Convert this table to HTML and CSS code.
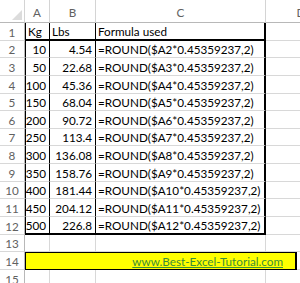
FILE: index.html
```html
<!DOCTYPE html>
<html>
<head>
<meta charset="utf-8">
<link rel="stylesheet" href="styles.css">
</head>
<body>
<div class="sheet">
  <div class="ch corner"><span class="tri"></span></div>
  <div class="ch">A</div>
  <div class="ch">B</div>
  <div class="ch">C</div>
  <div class="ch cd">D</div>

  <div class="rh">1</div>
  <div class="c a hd">Kg</div>
  <div class="c b hd">Lbs</div>
  <div class="c f hd rt">Formula used</div>
  <div class="c d"></div><div class="c e"></div>

  <div class="rh">2</div><div class="c a n">10</div><div class="c b n">4.54</div><div class="c f rt">=ROUND($A2*0.45359237,2)</div><div class="c d"></div><div class="c e"></div>
  <div class="rh">3</div><div class="c a n">50</div><div class="c b n">22.68</div><div class="c f rt">=ROUND($A3*0.45359237,2)</div><div class="c d"></div><div class="c e"></div>
  <div class="rh">4</div><div class="c a n">100</div><div class="c b n">45.36</div><div class="c f rt">=ROUND($A4*0.45359237,2)</div><div class="c d"></div><div class="c e"></div>
  <div class="rh">5</div><div class="c a n">150</div><div class="c b n">68.04</div><div class="c f rt">=ROUND($A5*0.45359237,2)</div><div class="c d"></div><div class="c e"></div>
  <div class="rh">6</div><div class="c a n">200</div><div class="c b n">90.72</div><div class="c f rt">=ROUND($A6*0.45359237,2)</div><div class="c d"></div><div class="c e"></div>
  <div class="rh">7</div><div class="c a n">250</div><div class="c b n">113.4</div><div class="c f rt">=ROUND($A7*0.45359237,2)</div><div class="c d"></div><div class="c e"></div>
  <div class="rh">8</div><div class="c a n">300</div><div class="c b n">136.08</div><div class="c f rt">=ROUND($A8*0.45359237,2)</div><div class="c d"></div><div class="c e"></div>
  <div class="rh">9</div><div class="c a n">350</div><div class="c b n">158.76</div><div class="c f rt">=ROUND($A9*0.45359237,2)</div><div class="c d"></div><div class="c e"></div>
  <div class="rh">10</div><div class="c a n">400</div><div class="c b n">181.44</div><div class="c f rt">=ROUND($A10*0.45359237,2)</div><div class="c d"></div><div class="c e"></div>
  <div class="rh">11</div><div class="c a n">450</div><div class="c b n">204.12</div><div class="c f rt">=ROUND($A11*0.45359237,2)</div><div class="c d"></div><div class="c e"></div>
  <div class="rh">12</div><div class="c a n last">500</div><div class="c b n last">226.8</div><div class="c f rt last">=ROUND($A12*0.45359237,2)</div><div class="c d"></div><div class="c e"></div>

  <div class="rh">13</div><div class="c g"></div><div class="c g"></div><div class="c g"></div><div class="c d"></div><div class="c e"></div>

  <div class="rh">14</div>
  <div class="link-cell"><a class="link" href="#">www.Best-Excel-Tutorial.com</a></div>
  <div class="c e"></div>

  <div class="rh">15</div><div class="c g"></div><div class="c g"></div><div class="c g"></div><div class="c d"></div><div class="c e"></div>
</div>
</body>
</html>
```

FILE: styles.css
```css
html, body {
  margin: 0;
  padding: 0;
  background: #fff;
}
body {
  width: 300px;
  height: 283px;
  overflow: hidden;
  font-family: Lato, "Liberation Sans", sans-serif;
  font-size: 11.7px;
  color: #000;
}
.sheet {
  display: grid;
  grid-template-columns: 25px 25px 46px 170px 31px 40px;
  grid-template-rows: 23px repeat(15, 17.65px);
  width: 337px;
}
.sheet > div {
  box-sizing: border-box;
  white-space: nowrap;
  overflow: hidden;
}
.ch {
  display: flex;
  align-items: center;
  justify-content: center;
  color: #616161;
  border-right: 1px solid #d4d4d4;
  border-bottom: 1px solid #b8b8b8;
  padding-top: 2px;
}
.ch.cd {
  grid-column: span 2;
}
.corner {
  position: relative;
}
.tri {
  position: absolute;
  right: 2px;
  bottom: 2px;
  width: 0;
  height: 0;
  border-left: 10px solid transparent;
  border-bottom: 10px solid #dcdcdc;
}
.rh {
  display: flex;
  align-items: flex-end;
  justify-content: center;
  padding-bottom: 1px;
  color: #616161;
  border-right: 1px solid #b8b8b8;
  border-bottom: 1px solid #d8d8d8;
}
.c {
  display: flex;
  align-items: flex-end;
  padding: 0 3px 1px 2px;
  border-right: 1px solid #d8d8d8;
  border-bottom: 1px solid #d8d8d8;
}
.c.a {
  border-left: 1px solid #000;
  border-right: 1px solid #000;
}
.c.b {
  border-right: 1px solid #000;
}
.c.rt {
  border-right: 2px solid #000;
}
.c.n {
  justify-content: flex-end;
}
.c.hd {
  border-bottom: 2px solid #000;
}
.c.last {
  border-bottom: 2px solid #000;
}
.c.d {
  border-right: none;
}
.c.e {
  border-right: none;
}
.link-cell {
  grid-column: 2 / 6;
  background: #ffff00;
  border: 1px solid #000;
  border-right: 2px solid #000;
  display: flex;
  align-items: flex-end;
  justify-content: flex-end;
  padding: 0 12px 1px 2px;
}
.link {
  color: #3b8e3b;
  text-decoration: underline;
}
```
